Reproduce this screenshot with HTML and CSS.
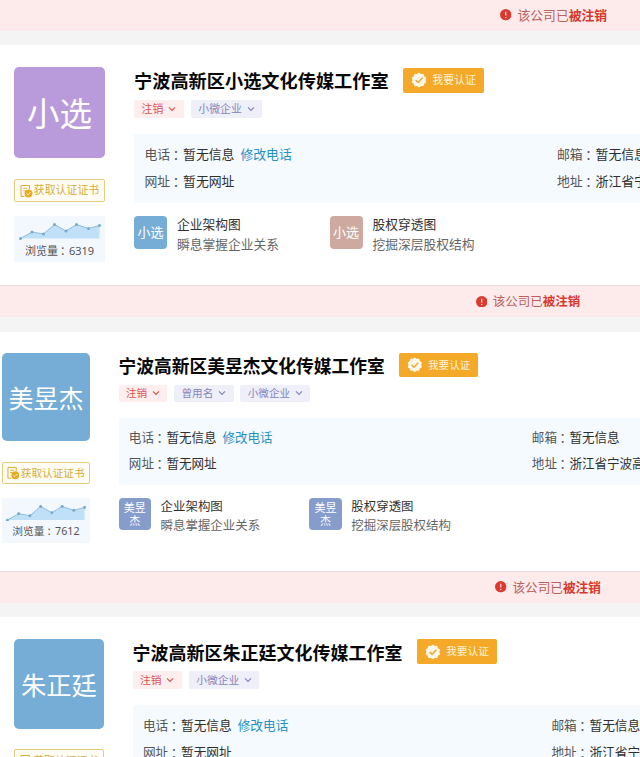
FILE: index.html
```html
<!DOCTYPE html>
<html lang="zh-CN">
<head>
<meta charset="utf-8">
<title>企业信息</title>
<link rel="stylesheet" href="styles.css">
</head>
<body>
<svg class="defs" aria-hidden="true">
  <symbol id="i-alert" viewBox="0 0 12 12"><circle cx="6" cy="6" r="6" fill="#dc3a30"/><path d="M6 2.8v4" stroke="#ffd9d4" stroke-width="1.3" fill="none"/><circle cx="6" cy="8.8" r=".8" fill="#ffd9d4"/></symbol>
  <symbol id="i-down" viewBox="0 0 8 6"><path d="M1 1.3l3 3 3-3" fill="none" stroke="currentColor" stroke-width="1.2"/></symbol>
  <symbol id="i-badge" viewBox="0 0 16 16"><path d="M8 .4l2 1.5 2.5-.1.7 2.4 2.1 1.4L14.500 8l.8 2.400-2.100 1.400-.7 2.400-2.500-.1-2 1.500-2-1.500-2.500.1-.7-2.400L.7 10.400 1.500 8 .7 5.600l2.100-1.400.7-2.400 2.500.1z" fill="#fff8e8"/><path d="M4.600 8l2.500 2.500 4.500-4.700" fill="none" stroke="#e9a93a" stroke-width="1.500"/></symbol>
  <symbol id="i-cert" viewBox="0 0 14 14"><path d="M5.500 12.500H2V1.500h8.500V5M4.300 4.300h4M4.300 6.800h2" fill="none" stroke="#dfaa35" stroke-width="1"/><circle cx="9.500" cy="9.500" r="4" fill="#eaa922"/><path d="M7.600 9.500l1.500 1.400 2.400-2.600" fill="none" stroke="#fff5d8" stroke-width="1"/></symbol>
  <symbol id="i-trend" viewBox="0 0 82 18"><path d="M1.500 16.500L13 10l11.500 2L35.500 2.500 47 9 57.500 2.500 69.500 6.500 80.500 3.500V16.500z" fill="#c0e0f7"/><path d="M1.500 16.500L13 10l11.500 2L35.500 2.500 47 9 57.500 2.500 69.500 6.500 80.500 3.500" fill="none" stroke="#8fbcdc" stroke-width="1"/><g fill="#76a9cd"><circle cx="1.500" cy="16.500" r="1.500"/><circle cx="13" cy="10" r="1.500"/><circle cx="24.500" cy="12" r="1.500"/><circle cx="35.500" cy="2.500" r="1.500"/><circle cx="47" cy="9" r="1.500"/><circle cx="57.500" cy="2.500" r="1.500"/><circle cx="69.500" cy="6.500" r="1.500"/><circle cx="80.500" cy="3.500" r="1.500"/></g></symbol>
</svg>

<section class="company first">
  <div class="alert"><svg><use href="#i-alert"/></svg><span>该公司已<b>被注销</b></span></div>
  <div class="card">
    <aside class="side">
      <div class="logo purple two">小选</div>
      <div class="cert"><svg><use href="#i-cert"/></svg>获取认证证书</div>
      <div class="views"><svg><use href="#i-trend"/></svg><div>浏览量<i>：</i>6319</div></div>
    </aside>
    <main class="main">
      <div class="head"><h2>宁波高新区小选文化传媒工作室</h2><div class="verify"><svg><use href="#i-badge"/></svg>我要认证</div></div>
      <div class="tags"><span class="tag red">注销<svg><use href="#i-down"/></svg></span><span class="tag">小微企业<svg><use href="#i-down"/></svg></span></div>
      <div class="info">
        <div class="col"><p>电话<i>：</i><em>暂无信息</em><a>修改电话</a></p><p>网址<i>：</i><em>暂无网址</em></p></div>
        <div class="col"><p>邮箱<i>：</i><em>暂无信息</em></p><p>地址<i>：</i><em>浙江省宁</em></p></div>
      </div>
      <div class="links">
        <div class="link"><div class="mini blue">小选</div><div><h3>企业架构图</h3><p>瞬息掌握企业关系</p></div></div>
        <div class="link"><div class="mini rose">小选</div><div><h3>股权穿透图</h3><p>挖掘深层股权结构</p></div></div>
      </div>
    </main>
  </div>
</section>

<section class="company second">
  <div class="alert"><svg><use href="#i-alert"/></svg><span>该公司已<b>被注销</b></span></div>
  <div class="card">
    <aside class="side">
      <div class="logo blue">美昱杰</div>
      <div class="cert"><svg><use href="#i-cert"/></svg>获取认证证书</div>
      <div class="views"><svg><use href="#i-trend"/></svg><div>浏览量<i>：</i>7612</div></div>
    </aside>
    <main class="main">
      <div class="head"><h2>宁波高新区美昱杰文化传媒工作室</h2><div class="verify"><svg><use href="#i-badge"/></svg>我要认证</div></div>
      <div class="tags"><span class="tag red">注销<svg><use href="#i-down"/></svg></span><span class="tag">曾用名<svg><use href="#i-down"/></svg></span><span class="tag">小微企业<svg><use href="#i-down"/></svg></span></div>
      <div class="info">
        <div class="col"><p>电话<i>：</i><em>暂无信息</em><a>修改电话</a></p><p>网址<i>：</i><em>暂无网址</em></p></div>
        <div class="col"><p>邮箱<i>：</i><em>暂无信息</em></p><p>地址<i>：</i><em>浙江省宁波高</em></p></div>
      </div>
      <div class="links">
        <div class="link"><div class="mini indigo small">美昱杰</div><div><h3>企业架构图</h3><p>瞬息掌握企业关系</p></div></div>
        <div class="link"><div class="mini indigo small">美昱杰</div><div><h3>股权穿透图</h3><p>挖掘深层股权结构</p></div></div>
      </div>
    </main>
  </div>
</section>

<section class="company third">
  <div class="alert"><svg><use href="#i-alert"/></svg><span>该公司已<b>被注销</b></span></div>
  <div class="card">
    <aside class="side">
      <div class="logo blue">朱正廷</div>
      <div class="cert"><svg><use href="#i-cert"/></svg>获取认证证书</div>
    </aside>
    <main class="main">
      <div class="head"><h2>宁波高新区朱正廷文化传媒工作室</h2><div class="verify"><svg><use href="#i-badge"/></svg>我要认证</div></div>
      <div class="tags"><span class="tag red">注销<svg><use href="#i-down"/></svg></span><span class="tag">小微企业<svg><use href="#i-down"/></svg></span></div>
      <div class="info">
        <div class="col"><p>电话<i>：</i><em>暂无信息</em><a>修改电话</a></p><p>网址<i>：</i><em>暂无网址</em></p></div>
        <div class="col"><p>邮箱<i>：</i><em>暂无信息</em></p><p>地址<i>：</i><em>浙江省宁</em></p></div>
      </div>
    </main>
  </div>
</section>
</body>
</html>
```
FILE: styles.css
```css
* { box-sizing: border-box; margin: 0; padding: 0; }

body {
  width: 640px;
  height: 757px;
  overflow: hidden;
  background: #f4f4f4;
  font-family: "Noto Sans", "Noto Sans CJK SC", sans-serif;
  color: #555;
}

.defs { display: none; }
svg { display: block; flex: none; }
i, em { font-style: normal; }
/* half-width colon, padded to a full cell so that it sits in the middle */
i { padding: 0 .3em 0 .2em; font-feature-settings: "halt"; }

/* --s is the scale of one company block */
.company {
  --s: 1;
  display: flex;
  flex-direction: column;
}
.first { --left: 14px; --alert: 500px; --alert-h: 31px; --gap: 14px; --card-h: 240px; --mail: 422.500px; --title: 18.2px; --verify: 14.500px; }
.second { --s: .976; --left: 1.500px; --alert: 475.500px; --alert-h: 32px; --gap: 15px; --card-h: 239px; --mail: 413px; --title: 17.750px; --verify: 14.500px; }
.third { --s: .988; --left: 14px; --alert: 495px; --alert-h: 32px; --gap: 14px; --card-h: 140px; --mail: 418.500px; --title: 18px; --verify: 14.500px; }

.alert {
  display: flex;
  align-items: center;
  gap: calc(6px * var(--s));
  height: var(--alert-h);
  margin-bottom: var(--gap);
  padding-left: var(--alert);
  background: #fdeaea;
  color: #b9615c;
  font-size: calc(12.800px * var(--s));
  line-height: 20px;
  white-space: nowrap;
}
.first .alert { padding-bottom: 1px; }
.second .alert, .third .alert { border-top: 1px solid #eedcda; }
.third .alert { padding-bottom: 1px; }
.alert svg { width: 11.500px; height: 11.500px; }
.alert b { color: #d5382f; }

.card {
  display: flex;
  height: var(--card-h);
  padding: calc(22px * var(--s)) 0 0 var(--left);
  overflow: hidden;
  background: #fff;
}
.second .card { padding-top: 20.500px; }

.side {
  flex: none;
  width: calc(91px * var(--s));
  margin-right: calc(29px * var(--s));
}

.logo {
  display: flex;
  align-items: center;
  justify-content: center;
  height: calc(91px * var(--s));
  border-radius: 5px;
  color: #fff;
  font-size: calc(25.600px * var(--s));
  line-height: 1;
  padding-top: 3px;
}
.logo.two { font-size: 32.500px; }
.purple { background: #b99adb; }
.blue { background: #75add6; }
.rose { background: #cda99f; }
.indigo { background: #869dcb; }

.cert {
  display: flex;
  align-items: center;
  justify-content: center;
  gap: 1px;
  height: calc(23px * var(--s));
  margin-top: calc(21px * var(--s));
  padding-right: 1px;
  border: 1px solid #e3cd7d;
  border-radius: 2px;
  background: #fffdf3;
  color: #d6ac3c;
  font-size: calc(10.900px * var(--s));
  line-height: 1;
  white-space: nowrap;
}
.cert svg { width: calc(14px * var(--s)); height: calc(14px * var(--s)); }

.views {
  height: calc(46px * var(--s));
  margin-top: calc(14px * var(--s));
  padding-top: calc(6px * var(--s));
  background: #f2f8fe;
  font-size: calc(11px * var(--s));
  line-height: calc(21px * var(--s));
  text-align: center;
}
.views svg { width: calc(82px * var(--s)); height: calc(18px * var(--s)); margin: 0 auto; }

.main { flex: 1; min-width: 0; }

.head { display: flex; align-items: center; height: calc(26px * var(--s)); }
.head h2 {
  padding-top: 2px;
  color: #080808;
  font-size: var(--title);
  line-height: 24px;
  white-space: nowrap;
}
.verify {
  display: flex;
  align-items: center;
  justify-content: center;
  gap: calc(5px * var(--s));
  width: calc(81px * var(--s));
  height: calc(25px * var(--s));
  margin-left: var(--verify);
  border-radius: 2px;
  background: #f4a928;
  color: #fff3d5;
  font-size: calc(10.900px * var(--s));
  line-height: 1;
  white-space: nowrap;
}
.verify svg { width: calc(16px * var(--s)); height: calc(16px * var(--s)); }

.tags { display: flex; gap: calc(7px * var(--s)); margin-top: calc(7px * var(--s)); }
.tag {
  display: flex;
  align-items: center;
  gap: calc(5px * var(--s));
  height: calc(18px * var(--s));
  padding: 0 calc(7.500px * var(--s));
  border-radius: 2px;
  background: #efeffa;
  color: #8585b8;
  font-size: calc(10.900px * var(--s));
  line-height: 1;
}
.tag svg { width: 8px; height: 6px; }
.tag.red { background: #feeeee; color: #d85450; }

.info {
  display: grid;
  grid-template-columns: calc(var(--mail) - 10px) 1fr;
  height: calc(69px * var(--s));
  margin-top: calc(16px * var(--s));
  padding: calc(7px * var(--s)) 0 0 calc(10.500px * var(--s));
  overflow: hidden;
  background: #f5fafe;
  font-size: calc(12.850px * var(--s));
  line-height: calc(27.400px * var(--s));
  white-space: nowrap;
}
.info em { color: #2f2f2f; }
.info a { margin-left: calc(6px * var(--s)); color: #268fc4; }

.links { display: flex; margin-top: calc(13px * var(--s)); }
.link {
  display: flex;
  gap: calc(10px * var(--s));
  width: calc(195.500px * var(--s));
  font-size: calc(12.750px * var(--s));
  line-height: calc(19.500px * var(--s));
  white-space: nowrap;
}
.link > div:last-child { margin-top: calc(-1px * var(--s)); }
.link h3 { color: #333; font-size: inherit; font-weight: 400; }
.link p { color: #666; }
.mini {
  display: flex;
  align-items: center;
  justify-content: center;
  width: calc(33px * var(--s));
  height: calc(33px * var(--s));
  border-radius: 4px;
  color: #fff;
  font-size: 13px;
  line-height: 1;
}
.mini.small {
  padding: 0 5px;
  font-size: 11px;
  line-height: 13px;
  text-align: center;
  white-space: normal;
}
```
